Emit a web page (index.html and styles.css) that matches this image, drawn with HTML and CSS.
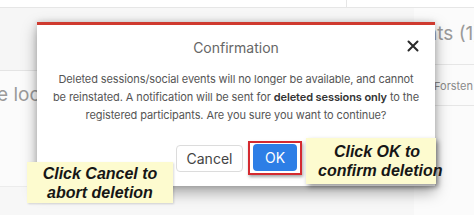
FILE: index.html
```html
<!DOCTYPE html>
<html>
<head>
<meta charset="utf-8">
<link rel="stylesheet" href="styles.css">
</head>
<body>
<div class="page">
  <div class="topbar"><div class="topbar-split"></div></div>
  <div class="main">
    <div class="left-col">
      <div class="left-head"></div>
      <div class="left-title">e location</div>
      <div class="left-rest"></div>
    </div>
    <div class="right-col">
      <div class="right-head">nts (1)</div>
      <div class="right-row">Forsten</div>
      <div class="right-rest"></div>
    </div>
  </div>
</div>

<div class="dialog">
  <div class="dialog-head">
    <span class="dialog-title">Confirmation</span>
    <svg class="close" width="12" height="12" viewBox="0 0 12 12"><path d="M1.5 1.5 L10.5 10.5 M10.5 1.5 L1.5 10.5" stroke="#2a2a2a" stroke-width="2" stroke-linecap="round" fill="none"/></svg>
  </div>
  <p class="dialog-body">Deleted sessions/social events will no longer be available, and cannot<br>be reinstated. A notification will be sent for <b>deleted sessions only</b> to the<br>registered participants. Are you sure you want to continue?</p>
  <div class="dialog-actions">
    <button class="btn btn-cancel">Cancel</button>
    <span class="highlight"><button class="btn btn-ok">OK</button></span>
  </div>
</div>

<div class="callout callout-cancel">Click Cancel to<br>abort deletion</div>
<div class="callout callout-ok">Click OK to<br>confirm deletion</div>
</body>
</html>
```

FILE: styles.css
```css
html, body {
  margin: 0;
  padding: 0;
}
body {
  width: 474px;
  height: 215px;
  overflow: hidden;
  position: relative;
  background: #f7f7f7;
  font-family: Inter, "Noto Sans", sans-serif;
}
.page {
  height: 215px;
  display: flex;
  flex-direction: column;
}
.topbar {
  height: 7px;
  background: #fff;
  border-bottom: 1px solid #e6e6e6;
}
.topbar-split {
  margin-left: 346px;
  width: 1px;
  height: 7px;
  background: #e6e6e6;
}
.main {
  flex: 1;
  display: flex;
  justify-content: space-between;
}
.left-col {
  width: 60px;
  display: flex;
  flex-direction: column;
}
.left-head {
  height: 62px;
  background: #f6f6f6;
  border-bottom: 1px solid #e4e4e4;
}
.left-title {
  margin-left: -3px;
  padding-top: 12px;
  height: 38px;
  font-size: 19px;
  color: #9a9a9a;
  white-space: nowrap;
  background: #fbfbfb;
}
.left-rest {
  flex: 1;
  background: #fbfbfb;
  border-bottom: 1px solid #ececec;
  margin-bottom: 28px;
}
.right-col {
  width: 60px;
  display: flex;
  flex-direction: column;
  background: #fbfbfb;
}
.right-head {
  box-sizing: border-box;
  height: 57px;
  padding-top: 14px;
  padding-left: 12px;
  font-size: 19px;
  color: #9a9a9a;
  white-space: nowrap;
  border-bottom: 1px solid #e6e6e6;
}
.right-row {
  height: 41px;
  box-sizing: border-box;
  padding-top: 14px;
  padding-left: 20px;
  font-size: 11px;
  color: #8a8a8a;
  white-space: nowrap;
  border-bottom: 1px solid #e6e6e6;
}
.right-rest {
  flex: 1;
}

.dialog {
  position: absolute;
  left: 37px;
  top: 22px;
  width: 398px;
  height: 164px;
  box-sizing: border-box;
  background: #fff;
  border-top: 3px solid #cf3a2f;
  box-shadow: 0 6px 14px rgba(0, 0, 0, 0.35), 0 0 6px rgba(0, 0, 0, 0.15);
}
.dialog-head {
  position: relative;
  height: 45px;
  display: flex;
  align-items: center;
  justify-content: center;
}
.dialog-title {
  font-size: 14px;
  color: #666;
}
.close {
  position: absolute;
  right: 16px;
  top: 15px;
}
.dialog-body {
  margin: 0;
  font-size: 11px;
  letter-spacing: -0.1px;
  line-height: 18px;
  color: #555;
  text-align: center;
  white-space: nowrap;
}
.dialog-body b {
  color: #333;
  font-weight: 600;
}
.dialog-actions {
  margin-top: 17px;
  padding-left: 6px;
  display: flex;
  justify-content: center;
  align-items: center;
  gap: 5px;
}
.btn {
  font-family: Inter, "Noto Sans", sans-serif;
  font-size: 14px;
  height: 27px;
  border-radius: 4px;
  padding: 0;
  margin: 0;
}
.btn-cancel {
  width: 67px;
  background: #fff;
  border: 1px solid #dcdcdc;
  color: #444;
}
.highlight {
  display: flex;
  border: 2px solid #d42a30;
  padding: 1px 3px 2px;
  box-shadow: 1px 2px 3px rgba(0, 0, 0, 0.35);
}
.btn-ok {
  width: 44px;
  background: #2d7ee6;
  border: none;
  color: #fff;
}

.callout {
  position: absolute;
  background: #fdfbcf;
  font-family: "Liberation Sans", Arial, sans-serif;
  font-weight: bold;
  font-style: italic;
  font-size: 16px;
  line-height: 19px;
  color: #161616;
  text-align: center;
  white-space: nowrap;
  box-sizing: border-box;
}
.callout-cancel {
  left: 27px;
  top: 162px;
  width: 146px;
  height: 41px;
  padding-top: 2px;
  box-shadow: 1px 1px 2px rgba(0, 0, 0, 0.15);
}
.callout-ok {
  left: 306px;
  top: 138px;
  width: 130px;
  height: 46px;
  padding-top: 4px;
  padding-left: 12px;
  box-shadow: 2px 3px 5px rgba(0, 0, 0, 0.4);
}
```
